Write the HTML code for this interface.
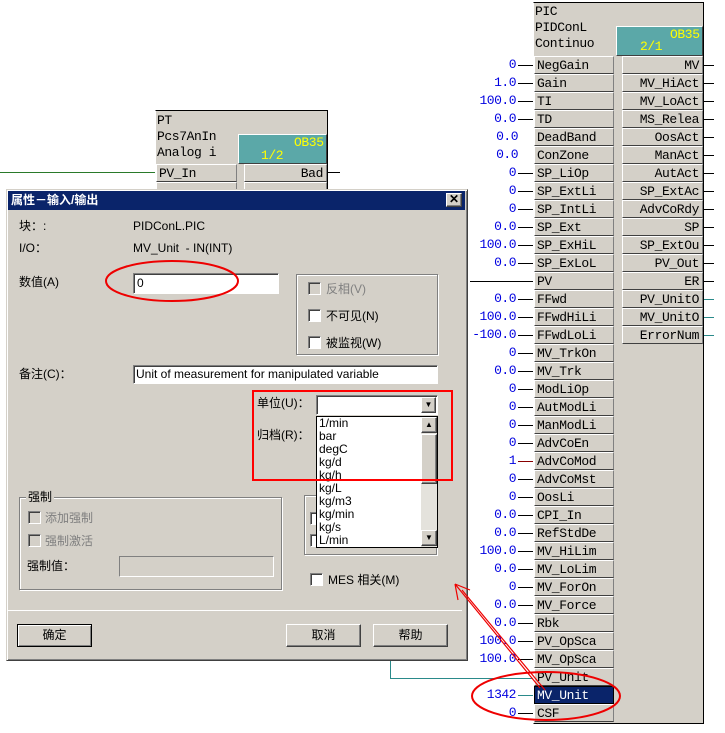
<!DOCTYPE html>
<html><head><meta charset="utf-8"><style>
*{margin:0;padding:0;box-sizing:border-box}
body{width:725px;height:733px;background:#fff;position:relative;overflow:hidden;font-family:"Liberation Mono","Noto Sans CJK SC",monospace;}
.a{position:absolute}
.m{font-family:"Liberation Mono",monospace;font-size:13px;line-height:17px;color:#000;white-space:pre;letter-spacing:-0.4px}
.c{position:absolute;background:#d4d0c8;border-top:1px solid #fff;border-left:1px solid #fff;border-right:1px solid #808080;border-bottom:1px solid #404040;height:18px;padding-left:2px}
.v{position:absolute;color:#0000e0;text-align:right;width:60px;font-family:"Liberation Mono",monospace;font-size:13px;letter-spacing:-0.5px;line-height:18px}
.ln{position:absolute;height:1px;background:#000}
.d{font-family:"Liberation Sans","Noto Sans CJK SC",sans-serif;font-size:12px;color:#000;white-space:nowrap;position:absolute;line-height:14px}
.sunk{position:absolute;background:#fff;border-top:1px solid #808080;border-left:1px solid #808080;border-right:1px solid #fff;border-bottom:1px solid #fff;box-shadow:inset 1px 1px 0 #404040}
.grp{position:absolute;border:1px solid #808080;box-shadow:1px 1px 0 #fff, inset 1px 1px 0 #fff}
.cb{position:absolute;width:13px;height:13px;background:#fff;border-top:1px solid #808080;border-left:1px solid #808080;border-right:1px solid #fff;border-bottom:1px solid #fff;box-shadow:inset 1px 1px 0 #404040}
.btn{position:absolute;height:23px;background:#d4d0c8;border-top:1px solid #fff;border-left:1px solid #fff;border-right:1px solid #404040;border-bottom:1px solid #404040;box-shadow:inset -1px -1px 0 #808080;text-align:center;font-family:"Liberation Sans","Noto Sans CJK SC",sans-serif;font-size:12px;line-height:20px}
.g{color:#808080}
</style></head><body>

<!-- PIC block -->
<div class="a" style="left:533px;top:2px;width:171px;height:722px;background:#d4d0c8;border:1px solid #000;border-left-color:#fff"></div>
<div class="a m" style="left:535px;top:4px;line-height:16px">PIC
PIDConL
Continuo</div>
<div class="a" style="left:616px;top:26px;width:87px;height:30px;background:#5ba8a8;border:1px solid #fff;border-right-color:#404040;border-bottom-color:#404040"></div>
<div class="a m" style="left:670px;top:26px;color:#ffff00">OB35</div>
<div class="a m" style="left:640px;top:38px;color:#ffff00">2/1</div>
<div id="L"></div>

<!-- PT block -->
<div class="a" style="left:155px;top:110px;width:173px;height:80px;background:#d4d0c8;border:1px solid #000;border-left-color:#fff"></div>
<div class="a m" style="left:157px;top:113px;line-height:16px">PT
Pcs7AnIn
Analog i</div>
<div class="a" style="left:238px;top:134px;width:89px;height:30px;background:#5ba8a8;border:1px solid #fff;border-right-color:#404040;border-bottom-color:#404040"></div>
<div class="a m" style="left:294px;top:134px;color:#ffff00">OB35</div>
<div class="a m" style="left:261px;top:147px;color:#ffff00">1/2</div>
<div class="c m" style="left:156px;top:164px;width:81px">PV_In</div>
<div class="c m" style="left:244px;top:164px;width:83px;text-align:right;padding-right:3px">Bad</div>
<div class="c m" style="left:156px;top:182px;width:81px"></div>
<div class="c m" style="left:244px;top:182px;width:83px"></div>
<div class="a" style="left:0;top:172px;width:155px;height:1px;background:#2a7a2a"></div>
<div class="ln" style="left:328px;top:172px;width:12px"></div>

<!-- teal wire -->
<div class="a" style="left:390px;top:660px;width:1px;height:18px;background:#2a8a8a"></div>
<div class="a" style="left:390px;top:678px;width:143px;height:1px;background:#2a8a8a"></div>

<!-- Dialog -->
<div class="a" style="left:6px;top:189px;width:462px;height:472px;background:#d4d0c8;border-top:1px solid #d4d0c8;border-left:1px solid #d4d0c8;border-right:1px solid #404040;border-bottom:1px solid #404040;box-shadow:inset 1px 1px 0 #fff,inset -1px -1px 0 #808080"></div>
<div class="a" style="left:8px;top:191px;width:457px;height:19px;background:#0a246a"></div>
<div class="a" style="left:11px;top:192px;color:#fff;font-weight:bold;font-family:'Liberation Sans','Noto Sans CJK SC',sans-serif;font-size:12px;line-height:17px">属性－输入/输出</div>
<div class="btn" style="left:446px;top:193px;width:16px;height:14px;line-height:11px;font-weight:bold;font-size:12px">✕</div>

<div class="d" style="left:19px;top:219px">块：:</div>
<div class="d" style="left:133px;top:219px">PIDConL.PIC</div>
<div class="d" style="left:19px;top:241px">I/O：</div>
<div class="d" style="left:133px;top:241px">MV_Unit&nbsp; - IN(INT)</div>
<div class="d" style="left:19px;top:275px">数值(A)</div>
<div class="sunk" style="left:133px;top:273px;width:146px;height:21px"></div>
<div class="d" style="left:137px;top:276px">0</div>

<div class="grp" style="left:296px;top:274px;width:142px;height:81px"></div>
<div class="cb" style="left:308px;top:282px;background:#d4d0c8"></div><div class="d g" style="left:326px;top:282px">反相(V)</div>
<div class="cb" style="left:308px;top:309px"></div><div class="d" style="left:326px;top:309px">不可见(N)</div>
<div class="cb" style="left:308px;top:336px"></div><div class="d" style="left:326px;top:336px">被监视(W)</div>

<div class="d" style="left:19px;top:367px">备注(C)：</div>
<div class="sunk" style="left:133px;top:365px;width:305px;height:19px"></div>
<div class="d" style="left:136px;top:367px">Unit of measurement for manipulated variable</div>

<div class="d" style="left:257px;top:396px">单位(U)：</div>
<div class="d" style="left:257px;top:428px">归档(R)：</div>
<div class="sunk" style="left:316px;top:395px;width:122px;height:20px"></div>
<div class="btn" style="left:421px;top:397px;width:15px;height:16px;font-size:8px;line-height:13px">▼</div>

<div class="grp" style="left:19px;top:497px;width:263px;height:93px"></div>
<div class="d" style="left:26px;top:490px;background:#d4d0c8;padding:0 2px">强制</div>
<div class="cb" style="left:28px;top:511px;background:#d4d0c8"></div><div class="d g" style="left:45px;top:511px">添加强制</div>
<div class="cb" style="left:28px;top:534px;background:#d4d0c8"></div><div class="d g" style="left:45px;top:534px">强制激活</div>
<div class="d" style="left:27px;top:559px">强制值：</div>
<div class="sunk" style="left:119px;top:556px;width:155px;height:21px;background:#d4d0c8;box-shadow:none"></div>

<div class="grp" style="left:304px;top:495px;width:133px;height:60px"></div>
<div class="cb" style="left:310px;top:512px"></div>
<div class="cb" style="left:310px;top:534px"></div>

<div class="cb" style="left:310px;top:573px"></div><div class="d" style="left:328px;top:573px">MES 相关(M)</div>

<div class="a" style="left:8px;top:610px;width:454px;height:1px;background:#808080;border-bottom:1px solid #fff"></div>
<div class="btn" style="left:17px;top:624px;width:75px;border:1px solid #000;box-shadow:inset 1px 1px 0 #fff,inset -1px -1px 0 #808080">确定</div>
<div class="btn" style="left:286px;top:624px;width:75px">取消</div>
<div class="btn" style="left:373px;top:624px;width:75px">帮助</div>

<!-- dropdown list -->
<div class="a" style="left:316px;top:416px;width:122px;height:132px;background:#fff;border:1px solid #000"></div>
<div class="d" style="left:319px;top:417px;line-height:13px">1/min<br>bar<br>degC<br>kg/d<br>kg/h<br>kg/L<br>kg/m3<br>kg/min<br>kg/s<br>L/min</div>
<div class="a" style="left:421px;top:417px;width:16px;height:130px;background:#e4e2dc"></div>
<div class="btn" style="left:421px;top:417px;width:16px;height:16px;font-size:8px;line-height:13px">▲</div>
<div class="btn" style="left:421px;top:434px;width:16px;height:50px"></div>
<div class="btn" style="left:421px;top:530px;width:16px;height:16px;font-size:8px;line-height:13px">▼</div>

<!-- red annotations -->
<svg class="a" style="left:0;top:0" width="725" height="733">
<ellipse cx="172" cy="281" rx="66" ry="20" fill="none" stroke="#e00" stroke-width="2"/>
<rect x="253" y="391" width="199" height="89" fill="none" stroke="#f00" stroke-width="2"/>
<ellipse cx="546" cy="696" rx="74" ry="24" fill="none" stroke="#e00" stroke-width="2"/>
<path d="M455 584 L540 688 M455 584 L470 590 M455 584 L458 600 M462 590 L545 690" fill="none" stroke="#e00" stroke-width="1.2"/>
</svg>

<script>
var L=[["NegGain","0"],["Gain","1.0"],["TI","100.0"],["TD","0.0"],["DeadBand","0.0",1],["ConZone","0.0",1],["SP_LiOp","0"],["SP_ExtLi","0"],["SP_IntLi","0"],["SP_Ext","0.0"],["SP_ExHiL","100.0"],["SP_ExLoL","0.0"],["PV",""],["FFwd","0.0"],["FFwdHiLi","100.0"],["FFwdLoLi","-100.0"],["MV_TrkOn","0"],["MV_Trk","0.0"],["ModLiOp","0"],["AutModLi","0"],["ManModLi","0"],["AdvCoEn","0"],["AdvCoMod","1"],["AdvCoMst","0"],["OosLi","0"],["CPI_In","0.0"],["RefStdDe","0.0"],["MV_HiLim","100.0"],["MV_LoLim","0.0"],["MV_ForOn","0"],["MV_Force","0.0"],["Rbk","0.0"],["PV_OpSca","100.0"],["MV_OpSca","100.0"],["PV_Unit",""],["MV_Unit","1342"],["CSF","0"]];
var R=["MV","MV_HiAct","MV_LoAct","MS_Relea","OosAct","ManAct","AutAct","SP_ExtAc","AdvCoRdy","SP","SP_ExtOu","PV_Out","ER","PV_UnitO","MV_UnitO","ErrorNum"];
var h="";
L.forEach(function(r,i){var y=56+i*18;var sel=r[0]=="MV_Unit";
h+='<div class="c m" style="left:534px;top:'+y+'px;width:80px;'+(sel?'background:#0a246a;color:#fff;border:1px solid #000;':'')+'">'+r[0]+'</div>';
if(r[1]!==""){h+='<div class="v" style="left:'+(r[2]?458:456)+'px;top:'+y+'px">'+r[1]+'</div>';
if(!r[2])h+='<div class="ln" style="left:518px;top:'+(y+9)+'px;width:15px;'+(r[0]=="AdvCoMod"?'background:#800;':'')+(sel?'background:#2a8a8a;':'')+'"></div>';}
else if(r[0]=="PV")h+='<div class="ln" style="left:470px;top:'+(y+9)+'px;width:63px"></div>';});
R.forEach(function(r,i){var y=56+i*18;
h+='<div class="c m" style="left:622px;top:'+y+'px;width:81px;text-align:right;padding-right:3px">'+r+'</div>';
h+='<div class="ln" style="left:704px;top:'+(y+9)+'px;width:10px;'+(i>=13?'background:#2a8a8a;':'')+'"></div>';});
document.getElementById("L").innerHTML=h;
</script>
</body></html>
